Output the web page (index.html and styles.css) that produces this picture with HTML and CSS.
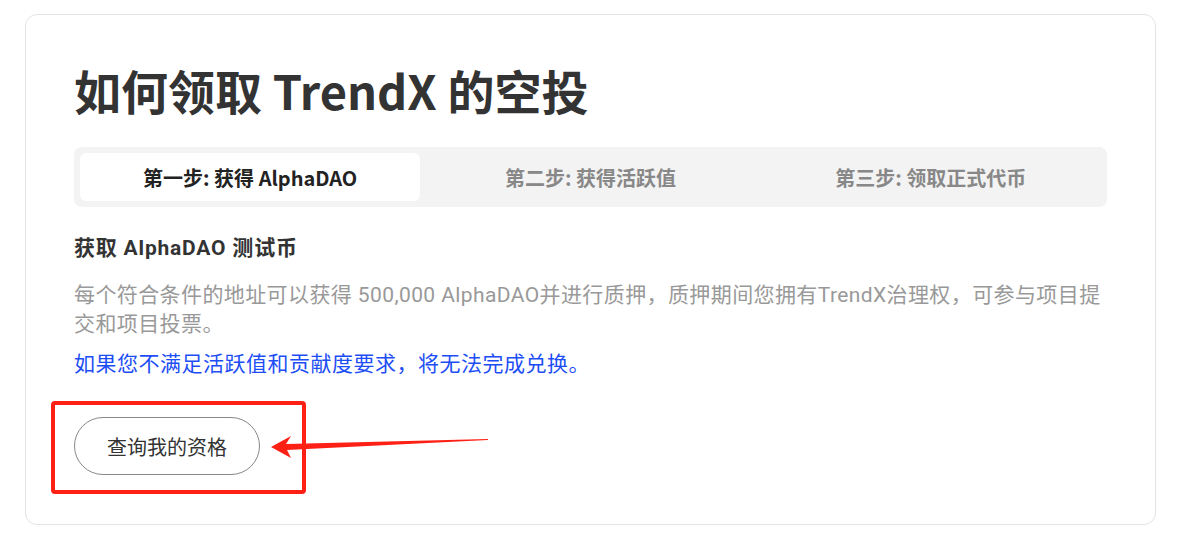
FILE: index.html
```html
<!DOCTYPE html>
<html lang="zh-CN">
<head>
    <meta charset="UTF-8">
    <meta name="viewport" content="width=device-width, initial-scale=1.0">
    <title>如何领取 TrendX 的空投</title>
    <link rel="stylesheet" href="styles.css">
</head>
<body>
    <div class="card">
        <h1 class="title">如何领取 TrendX 的空投</h1>

        <div class="tabs">
            <div class="tab active">第一步: 获得 AlphaDAO</div>
            <div class="tab">第二步: 获得活跃值</div>
            <div class="tab">第三步: 领取正式代币</div>
        </div>

        <h2 class="step-title">获取 AlphaDAO 测试币</h2>
        <p class="desc">每个符合条件的地址可以获得 500,000 AlphaDAO并进行质押，质押期间您拥有TrendX治理权，可参与项目提交和项目投票。</p>
        <p class="notice">如果您不满足活跃值和贡献度要求，将无法完成兑换。</p>

        <div class="action">
            <button class="check-btn" type="button">查询我的资格</button>
            <div class="highlight"></div>
            <svg class="arrow" width="230" height="30" viewBox="0 0 230 30">
                <polygon points="1,16 21,5 16,13 218,8 218,9 17,19 21,27" fill="#ff2015"/>
            </svg>
        </div>
    </div>
</body>
</html>
```

FILE: styles.css
```css
body {
    margin: 0;
    background: #fff;
    font-family: "Noto Sans CJK SC", "Noto Sans", sans-serif;
    color: #333;
}
.card {
    box-sizing: border-box;
    width: 1131px;
    height: 511px;
    margin: 14px 0 0 25px;
    padding: 43px 48px 0 48px;
    border: 1px solid #e4e4e4;
    border-radius: 12px;
}
.title {
    margin: 0;
    font-size: 47px;
    line-height: 64px;
    font-weight: 700;
    color: #333;
}
.tabs {
    display: flex;
    margin-top: 25px;
    padding: 6px;
    height: 60px;
    box-sizing: border-box;
    background: #f3f3f3;
    border-radius: 8px;
}
.tab {
    flex: 1;
    display: flex;
    align-items: center;
    justify-content: center;
    font-size: 20px;
    font-weight: 700;
    color: #888;
    border-radius: 6px;
}
.tab.active {
    background: #fff;
    color: #222;
}
.step-title {
    margin: 26px 0 0;
    font-family: Roboto, "Noto Sans CJK SC", sans-serif;
    font-size: 21px;
    line-height: 30px;
    font-weight: 700;
    letter-spacing: 0.8px;
    color: #333;
}
.desc,
.notice {
    font-family: Roboto, "Noto Sans CJK SC", sans-serif;
    font-size: 21px;
    line-height: 29px;
}
.desc {
    margin: 18px 0 0;
    letter-spacing: 0.4px;
    color: #999;
}
.notice {
    margin: 11px 0 0;
    letter-spacing: 0.5px;
    color: #1d4ef5;
}
.action {
    position: relative;
    margin-top: 38px;
}
.check-btn {
    width: 186px;
    height: 58px;
    padding: 0;
    border: 1px solid #888;
    border-radius: 29px;
    background: #fff;
    font-family: inherit;
    font-size: 20px;
    color: #333;
}
.highlight {
    position: absolute;
    left: -23px;
    top: -16px;
    width: 255px;
    height: 93px;
    box-sizing: border-box;
    border: 4px solid #ff2015;
    border-radius: 4px;
}
.arrow {
    position: absolute;
    left: 196px;
    top: 14px;
}
```
